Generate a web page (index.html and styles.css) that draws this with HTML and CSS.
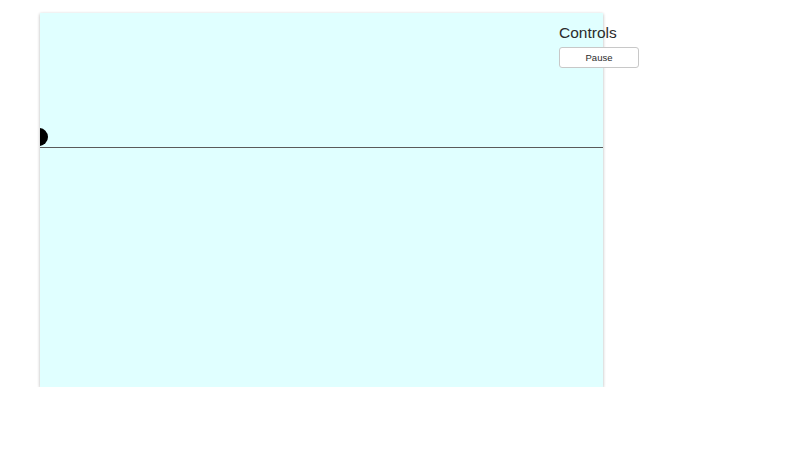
FILE: index.html
```html
<!DOCTYPE html>
<html>
<head>
<meta charset="utf-8">
<link rel="stylesheet" href="styles.css">
</head>
<body>
<div class="stage">
  <div class="canvas">
    <div class="ball"></div>
    <div class="ground"></div>
  </div>
  <div class="controls">
    <h3 class="controls-title">Controls</h3>
    <button class="btn">Pause</button>
  </div>
</div>
</body>
</html>
```

FILE: styles.css
```css
html, body {
  margin: 0;
  padding: 0;
  background: #fff;
  font-family: "Liberation Sans", Arial, sans-serif;
}
.stage {
  position: relative;
  padding: 13px 0 0 40px;
}
.canvas {
  position: relative;
  width: 563px;
  height: 374px;
  background: #e0ffff;
  box-shadow: 0 1px 3px rgba(0,0,0,0.3);
  overflow: hidden;
}
.ball {
  position: absolute;
  left: -10px;
  top: 115px;
  width: 18px;
  height: 18px;
  border-radius: 50%;
  background: #000;
}
.ground {
  position: absolute;
  left: 0;
  right: 0;
  top: 134px;
  height: 1px;
  background: #5a5a5a;
}
.controls {
  position: absolute;
  left: 559px;
  top: 23px;
  display: flex;
  flex-direction: column;
  align-items: flex-start;
}
.controls-title {
  margin: 0 0 4px 0;
  font-size: 15.5px;
  font-weight: normal;
  color: #2b2b2b;
  line-height: 20px;
}
.btn {
  width: 80px;
  height: 21px;
  padding: 0;
  background: #fff;
  border: 1px solid #c8c8c8;
  border-radius: 3px;
  font-family: "Liberation Sans", Arial, sans-serif;
  font-size: 9.5px;
  color: #2b2b2b;
}
```
